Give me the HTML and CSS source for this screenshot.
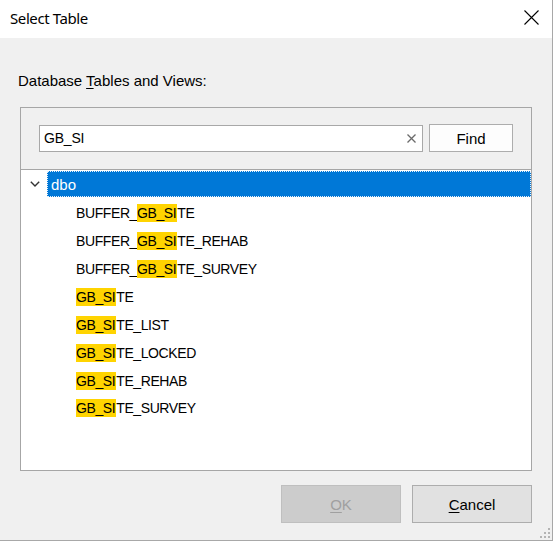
FILE: index.html
```html
<!DOCTYPE html>
<html lang="en">

<head>
    <meta charset="UTF-8">
    <meta name="viewport" content="width=device-width, initial-scale=1.0">
    <title>Select Table</title>
    <link rel="stylesheet" href="styles.css">
</head>

<body>
    <div class="window">
        <div class="titlebar">
            <span class="title">Select Table</span>
            <span class="close">
                <svg width="15" height="15" viewBox="0 0 15 15">
                    <path d="M0.5 0.5 L14.5 14.5 M14.5 0.5 L0.5 14.5" stroke="#000" stroke-width="1.1" fill="none"/>
                </svg>
            </span>
        </div>

        <div class="content">
            <div class="label">Database <u>T</u>ables and Views:</div>

            <div class="panel">
                <div class="search-row">
                    <div class="search-box">
                        <span class="search-text">GB_SI</span>
                        <span class="clear">
                            <svg width="9" height="9" viewBox="0 0 9 9">
                                <path d="M0.5 0.5 L8.5 8.5 M8.5 0.5 L0.5 8.5" stroke="#6a6a6a" stroke-width="1.3" fill="none"/>
                            </svg>
                        </span>
                    </div>
                    <button type="button" class="find-button">Find</button>
                </div>

                <div class="tree">
                    <div class="tree-root">
                        <span class="chevron">
                            <svg width="10" height="6" viewBox="0 0 10 6">
                                <path d="M0.8 0.8 L5 5 L9.2 0.8" stroke="#333" stroke-width="1.4" fill="none"/>
                            </svg>
                        </span>
                        <span class="root-label">dbo</span>
                    </div>
                    <div class="tree-item">BUFFER_<mark>GB_SI</mark>TE</div>
                    <div class="tree-item">BUFFER_<mark>GB_SI</mark>TE_REHAB</div>
                    <div class="tree-item">BUFFER_<mark>GB_SI</mark>TE_SURVEY</div>
                    <div class="tree-item"><mark>GB_SI</mark>TE</div>
                    <div class="tree-item"><mark>GB_SI</mark>TE_LIST</div>
                    <div class="tree-item"><mark>GB_SI</mark>TE_LOCKED</div>
                    <div class="tree-item"><mark>GB_SI</mark>TE_REHAB</div>
                    <div class="tree-item"><mark>GB_SI</mark>TE_SURVEY</div>
                </div>
            </div>

            <div class="buttons">
                <button type="button" class="dialog-button" disabled><u>O</u>K</button>
                <button type="button" class="dialog-button"><u>C</u>ancel</button>
            </div>

            <svg class="grip" width="12" height="12" viewBox="0 0 12 12">
                <rect x="9" y="1" width="2" height="2" fill="#b4b4b4"/>
                <rect x="5" y="5" width="2" height="2" fill="#b4b4b4"/>
                <rect x="9" y="5" width="2" height="2" fill="#b4b4b4"/>
                <rect x="1" y="9" width="2" height="2" fill="#b4b4b4"/>
                <rect x="5" y="9" width="2" height="2" fill="#b4b4b4"/>
                <rect x="9" y="9" width="2" height="2" fill="#b4b4b4"/>
            </svg>
        </div>
    </div>
</body>

</html>
```

FILE: styles.css
```css
body {
    margin: 0;
    padding: 0;
    font-family: "Liberation Sans", Arial, sans-serif;
    color: #000;
}

.window {
    width: 553px;
    height: 541px;
    box-sizing: border-box;
    display: flex;
    flex-direction: column;
    border-right: 1px solid #a8a8a8;
    border-bottom: 1px solid #a8a8a8;
    background: #f0f0f0;
}

.titlebar {
    height: 38px;
    flex-shrink: 0;
    display: flex;
    align-items: center;
    justify-content: space-between;
    padding: 0 13px 0 10px;
    background: #fff;
}

.title {
    font-family: "Noto Sans", "Open Sans", sans-serif;
    font-size: 15px;
    letter-spacing: -0.4px;
    margin-top: -2px;
}

.close {
    display: flex;
    margin-top: -3px;
}

.content {
    position: relative;
    flex: 1;
    padding: 34px 20px 0 18px;
}

.label {
    font-size: 15px;
    line-height: 18px;
}

.label u,
.dialog-button u {
    text-underline-offset: 2px;
}

.panel {
    margin: 17px 0 0 2px;
    border: 1px solid #a6a6a6;
}

.search-row {
    display: flex;
    align-items: center;
    gap: 6px;
    padding: 16px 0 17px 18px;
    border-bottom: 1px solid #a6a6a6;
}

.search-box {
    width: 384px;
    height: 27px;
    box-sizing: border-box;
    display: flex;
    align-items: center;
    justify-content: space-between;
    padding: 0 6px 0 4px;
    background: #fff;
    border: 1px solid #a8a8a8;
}

.search-text {
    font-size: 14px;
    letter-spacing: -0.2px;
}

.clear {
    display: flex;
}

.find-button {
    width: 84px;
    height: 28px;
    margin: 0;
    padding: 0;
    font-family: "Liberation Sans", Arial, sans-serif;
    font-size: 15px;
    color: #000;
    background: #fdfdfd;
    border: 1px solid #adadad;
}

.tree {
    height: 300px;
    box-sizing: border-box;
    padding-top: 1px;
    background: #fff;
}

.tree-root {
    display: flex;
    height: 26px;
    margin-bottom: 2px;
}

.chevron {
    width: 26px;
    display: flex;
    align-items: center;
    justify-content: center;
    padding-left: 1px;
    box-sizing: border-box;
}

.root-label {
    flex: 1;
    display: flex;
    align-items: center;
    padding-left: 3px;
    font-size: 15px;
    color: #fff;
    background: #0078d7;
    border: 1px dotted #e6f0fa;
}

.tree-item {
    height: 28px;
    line-height: 28px;
    padding-left: 55px;
    font-size: 14px;
    letter-spacing: -0.4px;
}

.tree-item:nth-child(n+7) {
    height: 27.7px;
}

.tree-item mark {
    background: #ffd400;
    color: #000;
    padding: 1px 1px 1px 0;
}

.buttons {
    display: flex;
    justify-content: flex-end;
    gap: 11px;
    margin-top: 14px;
}

.dialog-button {
    width: 120px;
    height: 38px;
    margin: 0;
    padding: 0;
    font-family: "Liberation Sans", Arial, sans-serif;
    font-size: 15px;
    color: #000;
    background: #e1e1e1;
    border: 1px solid #adadad;
}

.dialog-button:disabled {
    color: #a0a0a0;
    background: #cccccc;
    border-color: #bfbfbf;
}

.grip {
    position: absolute;
    right: 1px;
    bottom: 1px;
}
```
